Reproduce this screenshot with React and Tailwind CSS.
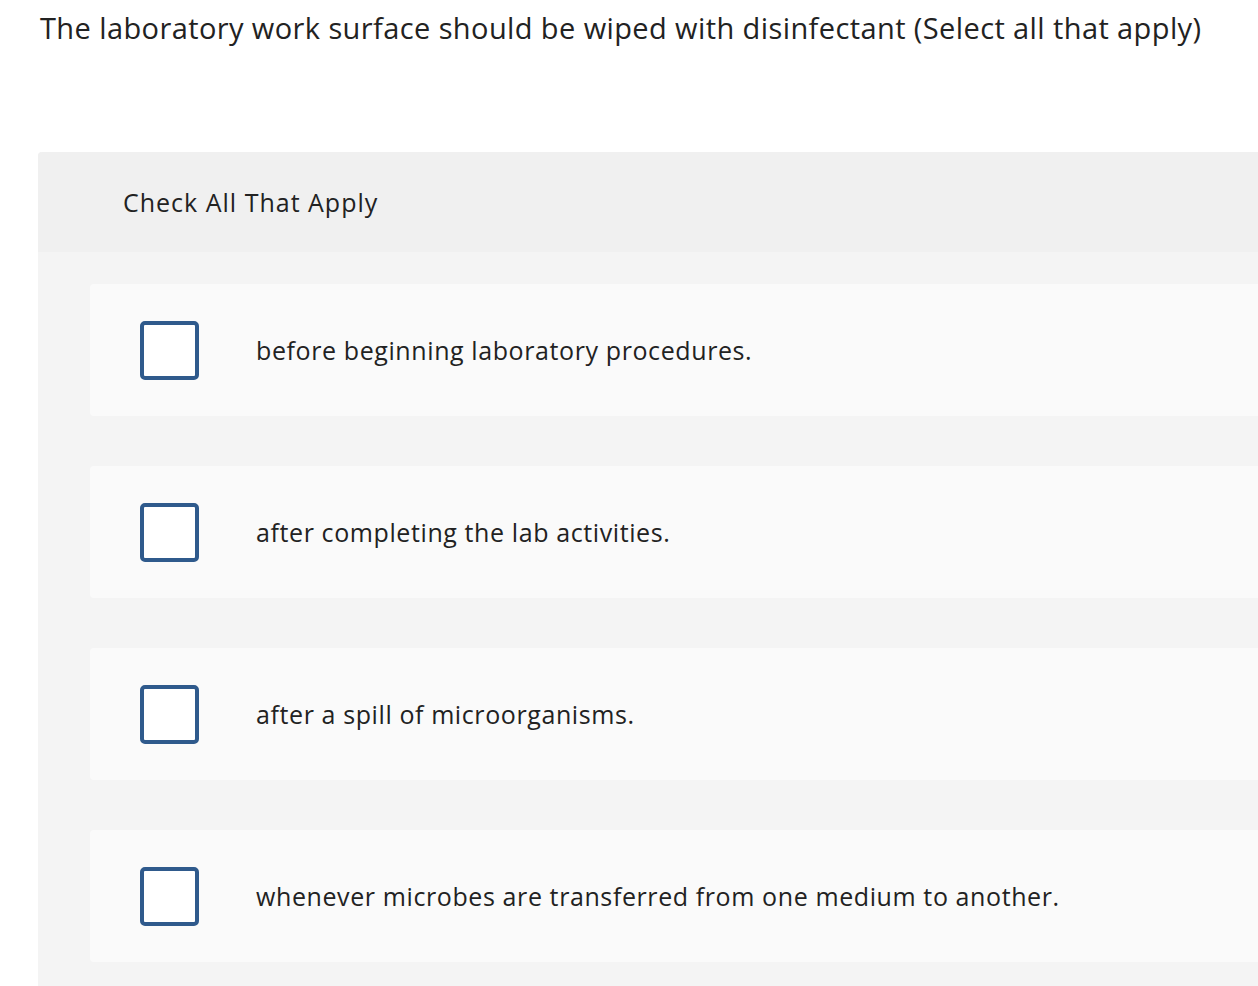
import React from 'react';

const options = [
  'before beginning laboratory procedures.',
  'after completing the lab activities.',
  'after a spill of microorganisms.',
  'whenever microbes are transferred from one medium to another.',
];

export default function App() {
  return (
    <div
      className="h-[986px] w-[1258px] overflow-hidden bg-white text-[#222]"
      style={{ fontFamily: '"Open Sans", Lato, sans-serif' }}
    >
      {/* Question */}
      <h1 className="pl-[40px] pt-[8px] text-[29px] leading-[40px] tracking-[0.4px] font-normal">
        The laboratory work surface should be wiped with disinfectant (Select all that apply)
      </h1>

      {/* Answer panel */}
      <div className="ml-[38px] mt-[104px] w-[1260px] rounded-tl-[4px] bg-[#f4f4f4]">
        <div className="flex h-[100px] items-center rounded-tl-[4px] bg-[#f0f0f0] pl-[85px]">
          <span className="text-[25px] leading-none tracking-[1px]">Check All That Apply</span>
        </div>

        <div className="flex flex-col gap-[50px] pl-[52px] pt-[32px] pb-[40px]">
          {options.map((text) => (
            <label
              key={text}
              className="flex h-[132px] cursor-pointer items-center rounded-l-[4px] bg-[#fafafa] pl-[50px]"
            >
              <span className="block h-[59px] w-[59px] shrink-0 rounded-[5px] border-[4px] border-[#2f5a8c] bg-white" />
              <span className="ml-[57px] text-[25px] leading-none tracking-[0.6px]">{text}</span>
            </label>
          ))}
        </div>
      </div>
    </div>
  );
}
